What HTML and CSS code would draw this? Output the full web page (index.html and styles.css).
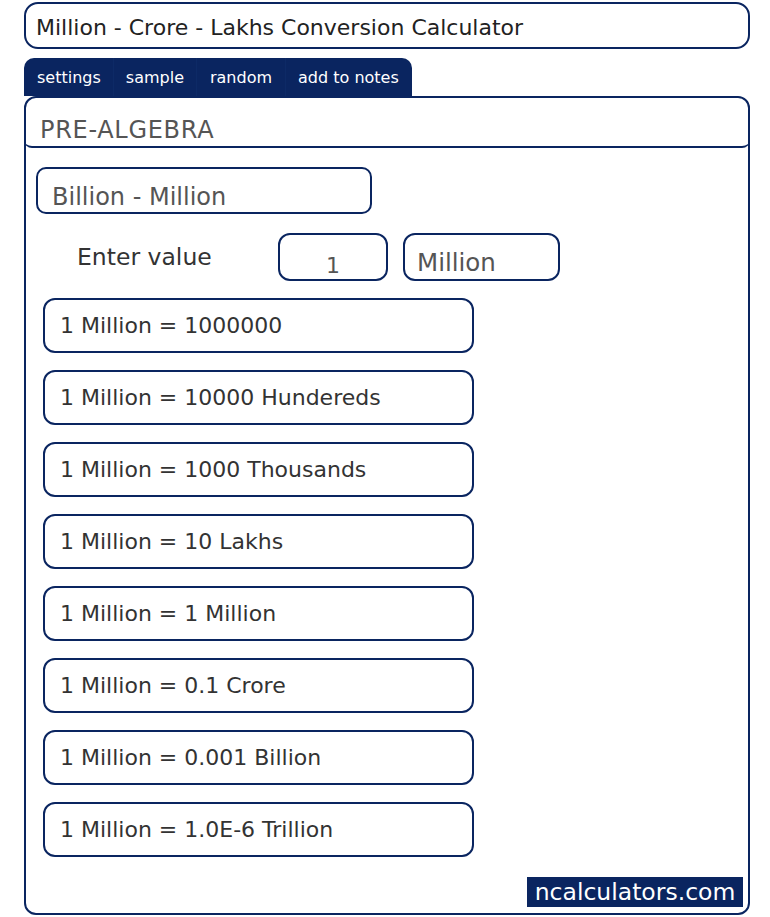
FILE: index.html
```html
<!DOCTYPE html>
<html>
<head>
<meta charset="utf-8">
<link rel="stylesheet" href="styles.css">
</head>
<body>
<div class="title">Million - Crore - Lakhs Conversion Calculator</div>
<div class="tabs">
  <span class="tab t1">settings</span>
  <span class="tab t2">sample</span>
  <span class="tab t3">random</span>
  <span class="tab t4">add to notes</span>
</div>
<div class="panel">
  <div class="heading">PRE-ALGEBRA</div>
  <div class="body">
    <div class="select">Billion - Million</div>
    <div class="entry">
      <span class="label">Enter value</span>
      <span class="input">1</span>
      <span class="unit">Million</span>
    </div>
    <div class="results">
      <div class="result">1 Million = 1000000</div>
      <div class="result">1 Million = 10000 Hundereds</div>
      <div class="result">1 Million = 1000 Thousands</div>
      <div class="result">1 Million = 10 Lakhs</div>
      <div class="result">1 Million = 1 Million</div>
      <div class="result">1 Million = 0.1 Crore</div>
      <div class="result">1 Million = 0.001 Billion</div>
      <div class="result">1 Million = 1.0E-6 Trillion</div>
    </div>
  </div>
  <div class="footer"><span class="brand">ncalculators.com</span></div>
</div>
</body>
</html>
```
FILE: styles.css
```css
* { box-sizing: border-box; }
html, body { background: #fff; }
body {
  margin: 0;
  padding: 2px 20px 0 24px;
  font-family: "DejaVu Sans", "Open Sans", sans-serif;
  color: #333;
}
.title {
  height: 47px;
  border: 2px solid #0a2560;
  border-radius: 14px;
  padding: 4px 0 0 10px;
  display: flex;
  align-items: center;
  font-size: 22px;
  color: #222;
}
.tabs {
  margin-top: 9px;
  display: inline-flex;
  height: 38px;
  width: 388px;
  background: #0a2560;
  border-radius: 10px 10px 0 0;
}
.tab {
  color: #fff;
  font-size: 16px;
  display: flex;
  align-items: center;
  padding: 0 12px;
  border-right: 1px solid #0d2a66;
}
.t1 { padding-left: 13px; }
.t3 { padding-left: 13px; padding-right: 13px; }
.tab:last-child { border-right: none; }
.panel {
  display: flex;
  flex-direction: column;
  height: 819px;
  border: 2px solid #0a2560;
  border-radius: 12px;
}
.heading {
  height: 50px;
  margin: 0 -2px;
  padding: 20px 0 0 16px;
  font-size: 24px;
  line-height: 1;
  letter-spacing: 0.7px;
  color: #555;
  border-bottom: 2px solid #0a2560;
  border-radius: 0 0 8px 8px;
}
.body {
  flex: 1;
  padding: 19px 0 0 10px;
}
.select {
  width: 336px;
  height: 47px;
  border: 2px solid #0a2560;
  border-radius: 10px;
  padding: 14px 0 0 14px;
  font-size: 24px;
  color: #555;
}
.entry {
  display: flex;
  align-items: center;
  margin-top: 19px;
  height: 48px;
}
.label {
  width: 242px;
  padding-left: 41px;
  font-size: 23.5px;
  color: #333;
}
.input, .unit {
  height: 48px;
  border: 2px solid #0a2560;
  border-radius: 12px;
  color: #555;
  display: flex;
  align-items: center;
}
.input {
  width: 110px;
  justify-content: center;
  font-size: 22px;
  padding-top: 16px;
}
.unit {
  width: 157px;
  margin-left: 15px;
  padding-left: 12px;
  padding-top: 11px;
  font-size: 24.5px;
}
.results {
  display: flex;
  flex-direction: column;
  gap: 17px;
  margin-top: 17px;
  padding-left: 7px;
}
.result {
  width: 431px;
  height: 55px;
  border: 2px solid #0a2560;
  border-radius: 12px;
  padding-left: 15px;
  display: flex;
  align-items: center;
  font-size: 22px;
  color: #333;
}
.footer {
  display: flex;
  justify-content: flex-end;
  padding: 0 5px 6px 0;
}
.brand {
  background: #0a2560;
  color: #fff;
  font-size: 23.5px;
  height: 30px;
  width: 216px;
  display: flex;
  align-items: center;
  justify-content: center;
}
```
